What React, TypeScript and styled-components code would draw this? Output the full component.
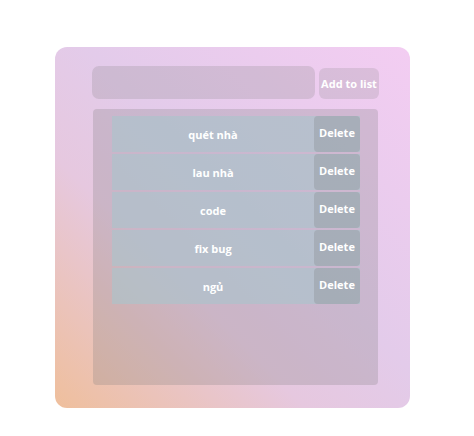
import React, { useState } from "react";
import styled, { createGlobalStyle } from "styled-components";

const GlobalStyle = createGlobalStyle`
  html, body {
    margin: 0;
    padding: 0;
    background: #ffffff;
  }
  body {
    font-family: "Open Sans", "Noto Sans", sans-serif;
  }
`;

const initialTodos = ["quét nhà", "lau nhà", "code", "fix bug", "ngủ"];

const App = () => {
  const [todos, setTodos] = useState<string[]>(initialTodos);
  const [value, setValue] = useState("");

  const addTodo = () => {
    if (!value.trim()) return;
    setTodos([...todos, value.trim()]);
    setValue("");
  };

  return (
    <Page>
      <GlobalStyle />
      <Card>
        <Form>
          <Input value={value} onChange={(e) => setValue(e.target.value)} />
          <AddButton onClick={addTodo}>Add to list</AddButton>
        </Form>
        <List>
          {todos.map((todo, index) => (
            <Row key={index}>
              <Label>{todo}</Label>
              <DeleteButton
                onClick={() => setTodos(todos.filter((_, i) => i !== index))}
              >
                Delete
              </DeleteButton>
            </Row>
          ))}
        </List>
      </Card>
    </Page>
  );
};

export default App;

const Page = styled.div`
  width: 474px;
  height: 436px;
  padding: 47px 0 0 55px;
  box-sizing: border-box;
`;

const Card = styled.div`
  width: 355px;
  height: 361px;
  box-sizing: border-box;
  padding: 19px 31px 23px 37px;
  border-radius: 12px;
  background: linear-gradient(45deg, #efbf9c 0%, #e6c8df 35%, #e3cbea 55%, #f3cdf2 100%);
  display: flex;
  flex-direction: column;
  gap: 10px;
`;

const Form = styled.div`
  display: flex;
  align-items: flex-end;
  gap: 4px;
`;

const Input = styled.input`
  width: 223px;
  height: 33px;
  box-sizing: border-box;
  border: none;
  outline: none;
  border-radius: 7px;
  background: rgba(128, 128, 128, 0.22);
  padding: 0 10px;
  color: #fff;
`;

const AddButton = styled.button`
  width: 60px;
  height: 31px;
  border: none;
  border-radius: 6px;
  background: rgba(128, 128, 128, 0.2);
  color: #ffffff;
  font-family: "Open Sans", "Noto Sans", sans-serif;
  font-weight: 700;
  font-size: 11px;
  padding: 0;
  white-space: nowrap;
  cursor: pointer;
`;

const List = styled.div`
  margin-left: 1px;
  width: 285px;
  flex: 1;
  box-sizing: border-box;
  padding: 7px 18px 0 19px;
  border-radius: 4px;
  background: rgba(125, 125, 125, 0.25);
  display: flex;
  flex-direction: column;
  gap: 2px;
`;

const Row = styled.div`
  display: flex;
  height: 36px;
  background: rgba(168, 196, 204, 0.6);
`;

const Label = styled.div`
  flex: 1;
  display: flex;
  align-items: center;
  justify-content: center;
  color: #ffffff;
  font-weight: 700;
  font-size: 11px;
`;

const DeleteButton = styled.button`
  width: 46px;
  height: 36px;
  border: none;
  border-radius: 4px;
  background: rgba(130, 132, 136, 0.3);
  color: #ffffff;
  font-family: "Open Sans", "Noto Sans", sans-serif;
  font-weight: 700;
  font-size: 11px;
  padding: 0 0 4px;
  cursor: pointer;
`;
